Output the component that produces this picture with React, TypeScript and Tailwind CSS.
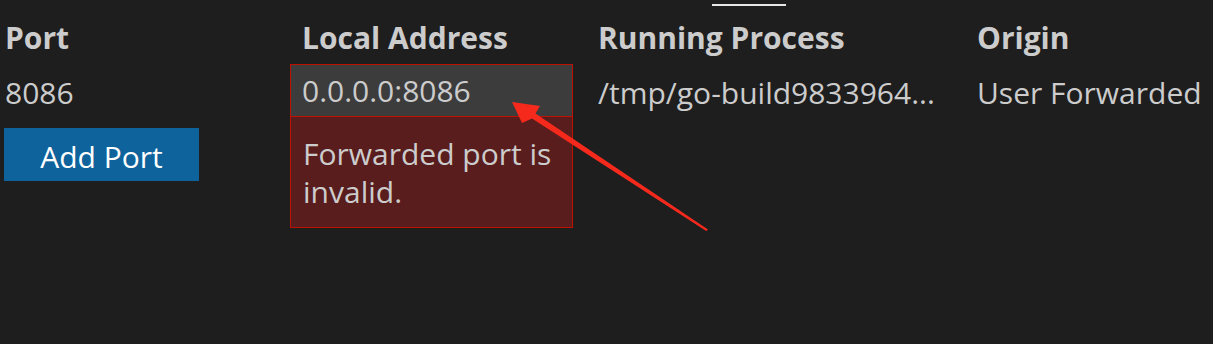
export default function App() {
  return (
    <div className="relative w-[1213px] h-[344px] overflow-hidden bg-[#1e1e1e] text-[#cccccc] font-['Open_Sans',sans-serif] text-[30px]">
      <div className="h-[10px] pl-[712px] pt-[4px]">
        <div className="w-[74px] h-[2px] bg-[#e7e7e7]" />
      </div>
      <div className="grid grid-cols-[286px_308px_379px_1fr] pl-[4px]">
        <div className="h-[54px] flex items-center pl-[1px] font-bold">Port</div>
        <div className="h-[54px] flex items-center pl-[12px] font-bold">Local Address</div>
        <div className="h-[54px] flex items-center font-bold">Running Process</div>
        <div className="h-[54px] flex items-center font-bold">Origin</div>

        <div className="flex flex-col">
          <div className="h-[53px] flex items-center pl-[1px] pt-[4px]">8086</div>
          <button className="mt-[11px] w-[195px] h-[53px] bg-[#0e639c] text-white flex items-center justify-center pt-[3px]">
            Add Port
          </button>
        </div>
        <div className="w-[283px] flex flex-col">
          <div className="h-[53px] border border-[#be1100] bg-[#3c3c3c] flex items-center pl-[11px]">
            0.0.0.0:8086
          </div>
          <div className="border border-t-0 border-[#be1100] bg-[#5a1d1d] pl-[12px] pt-[18px] pb-[16px] leading-[38px]">
            Forwarded port is
            <br />
            invalid.
          </div>
        </div>
        <div className="h-[53px] flex items-center pt-[4px]">/tmp/go-build9833964...</div>
        <div className="h-[53px] flex items-center pt-[4px] whitespace-nowrap">User Forwarded</div>
      </div>
      <svg className="absolute left-0 top-0" width="1213" height="344" viewBox="0 0 1213 344">
        <polygon
          points="512,102 540,106 535.5,113.6 708,229.5 706.2,231 532,118.6 522,123"
          fill="#f52a1c"
        />
      </svg>
    </div>
  );
}
